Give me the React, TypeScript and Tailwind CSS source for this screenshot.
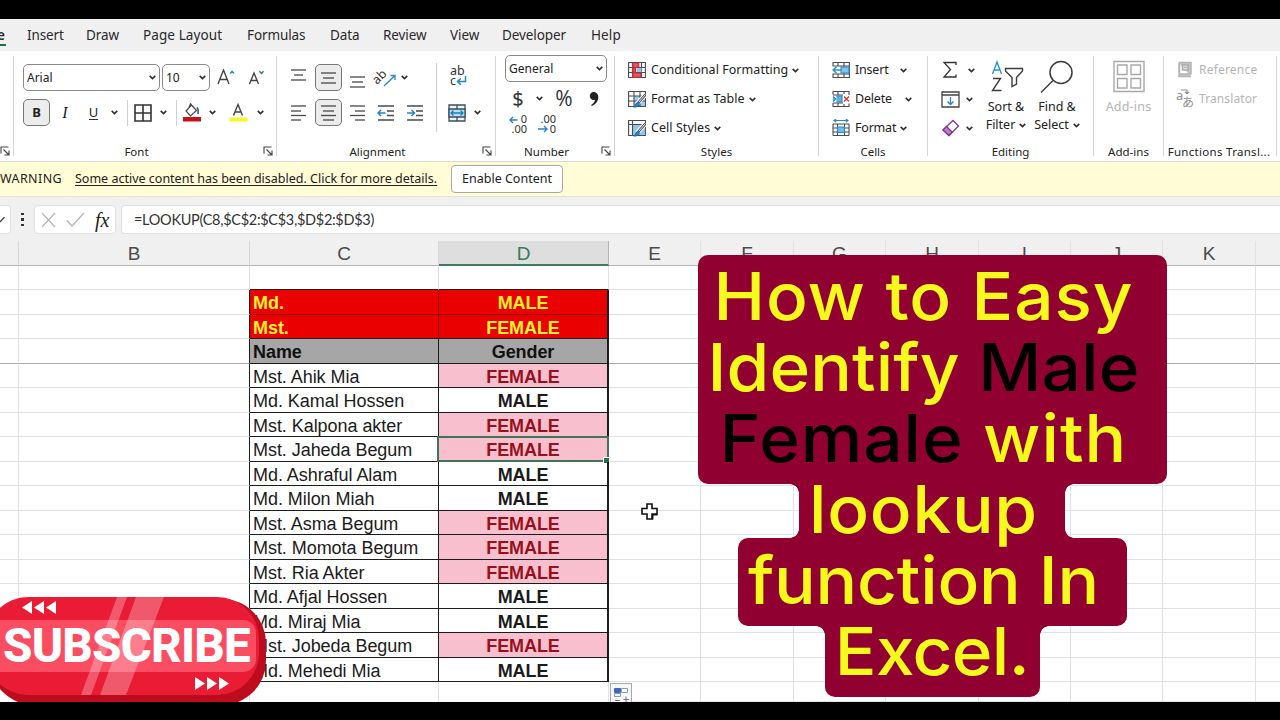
import type { ReactNode } from "react";

const ui = "font-['Noto_Sans','Open_Sans',sans-serif]";

function Chevron({ className = "" }: { className?: string }) {
  return (
    <svg className={`shrink-0 ${className}`} width="7" height="5" viewBox="0 0 7 5" fill="none" stroke="#2c2c2c" strokeWidth="1.5">
      <path d="M0.7 0.9 3.5 3.6 6.3 0.9" />
    </svg>
  );
}

function Launcher() {
  return (
    <svg width="10" height="10" viewBox="0 0 10 10" fill="none" stroke="#444" strokeWidth="1.1" className="absolute right-[3px] bottom-0">
      <path d="M1 7.5V1h7.5M3.5 3.5 8.5 8.5M9 4.5V9H4.5" />
    </svg>
  );
}

function Group({ width, label, launcher, children, labelClass = "" }: { width: string; label?: string; launcher?: boolean; children?: ReactNode; labelClass?: string }) {
  return (
    <section className={`relative flex h-[100px] shrink-0 flex-col border-r border-[#d4d4d4] ${width}`}>
      <div className="flex h-[86px] shrink-0 flex-col">{children}</div>
      <div className={`flex h-[19px] shrink-0 items-center justify-center text-[11.5px] leading-none whitespace-nowrap text-[#222] ${labelClass}`}>{label}</div>
      {launcher && <Launcher />}
    </section>
  );
}

function Slot({ w, children }: { w: string; children?: ReactNode }) {
  return <div className={`flex shrink-0 items-center justify-center ${w}`}>{children}</div>;
}

function Lines({ rows }: { rows: [number, number, number][] }) {
  return (
    <svg width="17" height="20" viewBox="0 0 17 20" stroke="#4a4a4a" strokeWidth="1.3" className="shrink-0">
      {rows.map(([y, a, b]) => (
        <path key={y} d={`M${a} ${y}H${b}`} />
      ))}
    </svg>
  );
}

const pressed = "flex h-[27px] w-[27px] shrink-0 items-center justify-center rounded-[5px] border border-[#777] bg-[#ececec]";

function GridIcon({ kind }: { kind: "cond" | "table" | "styles" | "insert" | "delete" | "format" }) {
  return (
    <svg width="18" height="18" viewBox="0 0 18 18" fill="none" stroke="#4b4b4b" strokeWidth="1.1" className="shrink-0">
      {kind === "cond" && (
        <>
          <path d="M.6 1.5H17.4V16.5H.6ZM.6 6.5H17.4M.6 11.5H17.4M4.5 1.5V16.5M13.5 1.5V16.5" />
          <path d="M4.8 2h6v4.2H4.8zM4.8 7h2.7v4H4.8zM4.8 12h8v4.2H4.8z" fill="#e9545d" stroke="#c52e38" />
          <path d="M8.500 7h5v4h-5z" fill="#8fc6ea" stroke="none" />
        </>
      )}
      {kind === "table" && (
        <>
          <path d="M.6 1.5H17.4V16.5H.6Z" />
          <path d="M6 6h11v10H6z" fill="#9ccdf0" stroke="none" />
          <path d="M.6 6H17M.6 11H17M6 1.5V16.5M12 1.5V16.5" />
          <path d="M17.5 4.5 9 14" stroke="#fff" strokeWidth="4.5" />
          <path d="M17.5 4.5 10.5 12.5" stroke="#4b4b4b" strokeWidth="2.6" />
          <path d="M17 5 11 12" stroke="#fff" strokeWidth=".9" />
          <path d="M5.5 17c2.5-.3 2-4 4.3-4.4 2.6.2 1.9 4.400-4.300 4.400Z" fill="#2f8fd6" stroke="#1c6da8" />
        </>
      )}
      {kind === "styles" && (
        <>
          <path d="M.6 1.5H17.4V16.5H.6Z" />
          <path d="M4.5 5.5H17V16H4.5z" fill="#8fc8ef" stroke="none" />
          <path d="M.6 5.5H17.4M4.5 1.5V16.5" />
          <path d="M17.5 4.5 9 14" stroke="#fff" strokeWidth="4.5" />
          <path d="M17.5 4.5 10.5 12.5" stroke="#4b4b4b" strokeWidth="2.6" />
          <path d="M17 5 11 12" stroke="#fff" strokeWidth=".9" />
          <path d="M5.5 17c2.5-.3 2-4 4.3-4.4 2.6.2 1.9 4.400-4.300 4.400Z" fill="#2f8fd6" stroke="#1c6da8" />
        </>
      )}
      {kind === "insert" && (
        <>
          <path d="M1 5.5V1.5H17.4V16.5H1V12.5M1 5H17M1 13H17M6 1.5V5M12 1.5V16.5M6 13V16.5" />
          <path d="M9 6H17V12H9z" fill="#7fc3ee" stroke="#2b87c4" />
          <path d="M9 9H1M4.5 5.8 1.2 9 4.5 12.2" stroke="#2492d1" strokeWidth="1.5" />
        </>
      )}
      {kind === "delete" && (
        <>
          <path d="M1 4.5V1.5H17V5M1 13V16.5H17V13.5M6 1.5V5M12 1.5V4M6 13V16.5M12 14V16.5M1 5H11M1 13H11" />
          <path d="M4.5 6H10V12H4.5M1 6.5 4 9 1 11.5" fill="#5bb1e8" stroke="#2b87c4" />
          <path d="M12 6.5 17 11.5M17 6.5 12 11.5" stroke="#d13438" strokeWidth="1.3" />
        </>
      )}
      {kind === "format" && (
        <>
          <path d="M2 1.5H16M4.2 0 2 1.5 4.2 3M13.8 0 16 1.5 13.8 3" stroke="#2b87c4" />
          <path d="M1 5H17M1 16.5H17M1 5V16.5M17 5V16.5M5.5 5V16.5M12.5 5V16.5M1 9H17M1 13H17" />
          <path d="M5.5 8H12.5V13.5H5.5z" fill="#6bbcf0" stroke="#2b87c4" />
        </>
      )}
    </svg>
  );
}

function Tabs() {
  const tabs: [string, string][] = [
    ["Insert", "w-[59px]"],
    ["Draw", "w-[57px]"],
    ["Page Layout", "w-[104px]"],
    ["Formulas", "w-[83px]"],
    ["Data", "w-[53px]"],
    ["Review", "w-[67px]"],
    ["View", "w-[52px]"],
    ["Developer", "w-[89px]"],
    ["Help", "w-[60px]"],
  ];
  return (
    <nav className="flex h-8 items-center bg-[#f0f0f0] text-[13.5px] leading-none text-[#2a2a2a]">
      <div className="flex h-full w-[27px] flex-col pt-[8px]">
        <span className="-ml-[3px] h-[17px] font-semibold leading-[17px]">e</span>
        <span className="h-[2px] w-[6px] bg-[#1f7145]" />
      </div>
      {tabs.map(([t, w]) => (
        <span key={t} className={`shrink-0 whitespace-nowrap pt-px ${t === "Page Layout" || t === "Help" ? "tracking-[0.100px]" : "tracking-[-0.100px]"} ${w}`}>{t}</span>
      ))}
    </nav>
  );
}

function FontGroup() {
  return (
    <Group width="w-[263px]" label="Font" launcher labelClass="pr-[17px]">
      <div className="mt-2 flex h-[27px] items-center pl-[9px]">
        <div className="flex h-[27px] w-[137px] items-center justify-between rounded-[5px] border border-[#8a8a8a] pr-[3px] pl-[3px] text-[12px]">
          <span>Arial</span>
          <Chevron />
        </div>
        <div className="ml-[2px] flex h-[27px] w-[48px] items-center justify-between rounded-[5px] border border-[#8a8a8a] pr-[3px] pl-[3px] text-[12px]">
          <span>10</span>
          <Chevron />
        </div>
        <Slot w="w-[32px]">
          <svg width="18" height="17" viewBox="0 0 18 17" fill="none" stroke="#444" strokeWidth="1.4">
            <path d="M1 15 6.5 1 12 15M3 10.500H10" />
            <path d="M13 4.5 15 2.3 17 4.5" stroke="#2d8f9c" />
          </svg>
        </Slot>
        <Slot w="w-[29px]">
          <svg width="17" height="17" viewBox="0 0 17 17" fill="none" stroke="#444" strokeWidth="1.4">
            <path d="M1.5 15 6 4 10.5 15M3 11.500H9" />
            <path d="M11.5 2.3 13.5 4.5 15.5 2.3" stroke="#2d6f9c" />
          </svg>
        </Slot>
      </div>
      <div className="mt-[8px] flex h-[27px] items-center pl-[9px]">
        <div className={`${pressed} text-[13px] font-bold`}>B</div>
        <Slot w="w-[30px]"><span className="font-['Liberation_Serif',serif] text-[16px] italic">I</span></Slot>
        <Slot w="w-[27px]"><span className="border-b-[1.5px] border-[#333] text-[13px] leading-[14px]">U</span></Slot>
        <Slot w="w-[15px]"><Chevron /></Slot>
        <Slot w="w-[11px]"><span className="h-[26px] w-px bg-[#d0d0d0]" /></Slot>
        <Slot w="w-[20px]">
          <svg width="18" height="18" viewBox="0 0 18 18" fill="none" stroke="#333" strokeWidth="1.6">
            <path d="M1 1H17V17H1ZM9 1V17M1 9H17" />
          </svg>
        </Slot>
        <Slot w="w-[20px]"><Chevron /></Slot>
        <Slot w="w-[6px]"><span className="h-[26px] w-px bg-[#d0d0d0]" /></Slot>
        <Slot w="w-[26px]">
          <svg width="20" height="20" viewBox="0 0 20 20" fill="none" stroke="#444" strokeWidth="1.2">
            <path d="M9.5 2 14.5 7.5 8.5 13 4 8ZM9.5 2 8.5 .8 7 4.5" />
            <path d="M14.8 4.5c1.5.8 1.6 3.5 1.2 6.5" stroke="#2c5f7e" strokeWidth="1.6" />
            <path d="M1 14H19V18.5H1z" fill="#c8101c" stroke="none" />
          </svg>
        </Slot>
        <Slot w="w-[15px]"><Chevron /></Slot>
        <Slot w="w-[37px]">
          <svg width="19" height="20" viewBox="0 0 19 20" fill="none" stroke="#444" strokeWidth="1.4">
            <path d="M4.5 12.5 9 1.5 13.5 12.5M6 9H12" />
            <path d="M.5 14.5H18.5V18.5H.5z" fill="#f6f62a" stroke="none" />
          </svg>
        </Slot>
        <Slot w="w-[7px]"><Chevron /></Slot>
      </div>
    </Group>
  );
}

function AlignmentGroup() {
  return (
    <Group width="w-[219px]" label="Alignment" launcher labelClass="pr-[17px]">
      <div className="mt-2 flex">
        <div className="flex w-[159px] flex-col gap-[8px] pl-[13px]">
          <div className="flex h-[27px] items-center">
            <Lines rows={[[2, 1, 16], [7, 4, 13], [12, 1, 16]]} />
            <div className={`${pressed} ml-[8px]`}><Lines rows={[[5, 1, 16], [10, 3, 14], [15, 1, 16]]} /></div>
            <div className="ml-[7px] flex"><Lines rows={[[9, 1, 16], [14, 3, 14], [19, 1, 16]]} /></div>
            <svg width="19" height="20" viewBox="0 0 19 20" className="ml-[11px] overflow-visible" fill="none">
              <text x="-2" y="12" transform="rotate(-45 5 12)" fontSize="12.5" fill="#333">ab</text>
              <path d="M7 18 18 7.5M13.5 7.5H18V12" stroke="#2d87c0" strokeWidth="1.3" />
            </svg>
            <Chevron className="ml-[5px]" />
          </div>
          <div className="flex h-[27px] items-center">
            <Lines rows={[[3, 1, 16], [8, 1, 11], [12.5, 1, 16], [17, 1, 11]]} />
            <div className={`${pressed} ml-[8px]`}><Lines rows={[[3, 1, 16], [8, 3, 14], [12.5, 1, 16], [17, 3, 14]]} /></div>
            <div className="ml-[7px] flex"><Lines rows={[[3, 1, 16], [8, 6, 16], [12.5, 1, 16], [17, 6, 16]]} /></div>
            {[0, 1].map((i) => (
              <svg key={i} width="18" height="20" viewBox="0 0 18 20" fill="none" stroke="#4a4a4a" strokeWidth="1.3" className="ml-[11px]">
                <path d="M1 3H17M10 8H17M10 12.5H17M1 17H17" />
                <path d={i ? "M1 10H8M5.5 7 8.5 10 5.5 13" : "M1.5 10H8.5M4 7 1 10 4 13"} stroke="#2286c3" strokeWidth="1.5" />
              </svg>
            ))}
          </div>
        </div>
        <div className="-mt-px h-[69px] w-px bg-[#d0d0d0]" />
        <div className="flex flex-col gap-[8px] pl-[11px]">
          <div className="relative flex h-[27px] w-[18px] flex-col text-[12.5px] leading-[10px] text-[#333]">
            <span className="pt-[2px] pl-[2px]">ab<br />c</span>
            <svg width="11" height="11" viewBox="0 0 11 11" fill="none" stroke="#2286c3" strokeWidth="1.5" className="absolute top-[12px] left-[8px]">
              <path d="M9.5 0V5.5H2M4.8 2.5 1.5 5.5 4.8 8.8" />
            </svg>
          </div>
          <div className="flex h-[27px] items-center">
            <svg width="18" height="18" viewBox="0 0 18 18" fill="none" stroke="#3f4d58" strokeWidth="1.3">
              <path d="M1 1H17V17H1Z" fill="#e9f4fb" />
              <path d="M1 5H17V13H1Z" fill="#b8def5" />
              <path d="M9 1V5M9 13V17" />
              <path d="M3 9H15M5.5 6.5 3 9 5.5 11.5M12.5 6.5 15 9 12.5 11.5" stroke="#1d7fc0" />
            </svg>
            <Chevron className="ml-[8px]" />
          </div>
        </div>
      </div>
    </Group>
  );
}

function NumberGroup() {
  return (
    <Group width="w-[119px]" label="Number" launcher labelClass="pr-[17px]">
      <div className="-mt-px ml-[9px] flex h-[27px] w-[102px] shrink-0 items-center justify-between rounded-[5px] border border-[#8a8a8a] pr-[3px] pl-[3px] text-[12px]">
        <span>General</span>
        <Chevron />
      </div>
      <div className="mt-[3px] flex h-[27px] shrink-0 items-center pl-[9px] text-[#333]">
        <Slot w="w-[26px]"><span className="text-[20px] leading-none">$</span></Slot>
        <Slot w="w-[16px]"><Chevron /></Slot>
        <Slot w="w-[34px]"><span className="font-['Open_Sans',sans-serif] text-[21px] leading-none">%</span></Slot>
        <Slot w="w-[26px]">
          <svg width="10" height="16" viewBox="0 0 10 16"><path d="M4.5 1C7.5 1 9.3 3 9.3 6c0 4-2.6 7.4-6.5 9l-.6-1C4.5 12.5 5.8 11 6 8.8 3 9.6.8 7.7.8 5 .8 2.7 2.4 1 4.5 1Z" fill="#222" /></svg>
        </Slot>
      </div>
      <div className="mt-[2px] flex h-[22px] shrink-0 gap-[11px] pl-[13px] text-[11px] leading-[10px] text-[#333]">
        <div className="relative w-[18px] text-right"><div>0<br />.00</div>
          <svg width="9" height="8" viewBox="0 0 9 8" fill="none" stroke="#2286c3" strokeWidth="1.4" className="absolute top-[2px] left-0"><path d="M8.500 4H1M4 1 1 4 4 7" /></svg>
        </div>
        <div className="relative w-[18px] text-right"><div>.00<br />0</div>
          <svg width="10" height="8" viewBox="0 0 10 8" fill="none" stroke="#2286c3" strokeWidth="1.4" className="absolute top-[11px] left-0"><path d="M0 4H8.500M6 1 9 4 6 7" /></svg>
        </div>
      </div>
    </Group>
  );
}

function StylesGroup() {
  const items = [["cond", "Conditional Formatting"], ["table", "Format as Table"], ["styles", "Cell Styles"]] as const;
  return (
    <Group width="w-[204px]" label="Styles">
      {items.map(([k, t]) => (
        <div key={k} className="flex h-[29px] shrink-0 items-center pb-px pl-[13px] text-[12.5px] whitespace-nowrap">
          <GridIcon kind={k} />
          <span className="ml-[5px] pt-px tracking-[0.050px]">{t}</span>
          <Chevron className="ml-[4px]" />
        </div>
      ))}
    </Group>
  );
}

function CellsGroup() {
  const items = [["insert", "Insert", "w-[45px]"], ["delete", "Delete", "w-[50px]"], ["format", "Format", "w-[45px]"]] as const;
  return (
    <Group width="w-[109px]" label="Cells">
      {items.map(([k, t, w]) => (
        <div key={k} className="flex h-[29px] shrink-0 items-center pb-px pl-[13px] text-[12.5px] whitespace-nowrap">
          <GridIcon kind={k} />
          <span className={`ml-[5px] pt-px tracking-[-0.200px] ${w}`}>{t}</span>
          <Chevron />
        </div>
      ))}
    </Group>
  );
}

function EditingGroup() {
  return (
    <Group width="w-[166px]" label="Editing">
      <div className="flex">
        <div className="w-[50px] pl-[13px]">
          <div className="flex h-[29px] items-center gap-[8px] pb-px">
            <svg width="19" height="18" viewBox="0 0 19 18" fill="none" stroke="#333" strokeWidth="1.3"><path d="M15 4V1.5H3L9.5 8.5 3 16H15V13.5" /></svg>
            <Chevron />
          </div>
          <div className="flex h-[29px] items-center gap-[6px] pb-px">
            <svg width="19" height="17" viewBox="0 0 19 17" fill="none" stroke="#444" strokeWidth="1.3"><path d="M1 1H18V16H1ZM1 4H18" /><path d="M9.5 6V13.5M6.5 10.5 9.5 13.5 12.5 10.5" stroke="#2286c3" /></svg>
            <Chevron />
          </div>
          <div className="flex h-[29px] items-center gap-[6px] pb-px">
            <svg width="19" height="18" viewBox="0 0 19 18" fill="#fff" stroke="#7a3b86" strokeWidth="1.3"><path d="M12 1.5 17.5 7 8 16.5 2 11Z" /><path d="M5.5 7.5 11.3 13.2 8 16.5 2 11Z" fill="#c777d6" /></svg>
            <Chevron />
          </div>
        </div>
        <div className="flex w-[56px] flex-col items-center pt-[4px] text-[12.5px] leading-[18px]">
          <svg width="33" height="33" viewBox="0 0 33 33" fill="none" stroke="#3c3c3c" strokeWidth="1.4" className="ml-[2px]">
            <path d="M1.5 14 6 2 10.5 14M3 10H9" stroke="#2a93c4" />
            <path d="M2 18.5H9.5L1.5 30.5H10.500" />
            <path d="M14.5 8.5H31.5V11L25.5 17.5V24L21 26.5V17.5L14.5 11Z" />
          </svg>
          <span className="mt-[5px]">Sort &amp;</span>
          <span className="flex items-center gap-[4px]">Filter<Chevron /></span>
        </div>
        <div className="flex w-[46px] flex-col items-center pt-[4px] text-[12.5px] leading-[18px]">
          <svg width="34" height="34" viewBox="0 0 34 34" fill="none" stroke="#3c3c3c" strokeWidth="1.5" className="-mb-px shrink-0">
            <circle cx="21" cy="12.5" r="11" />
            <path d="M13 20.5 1 32.5" />
          </svg>
          <span className="mt-[5px]">Find &amp;</span>
          <span className="flex items-center gap-[4px]">Select<Chevron /></span>
        </div>
      </div>
    </Group>
  );
}

function Ribbon() {
  return (
    <div className="flex h-[111px] items-start overflow-hidden border-b border-[#d9d9d9] bg-white pt-[5px] text-[#222]">
      <Group width="w-[14px]" launcher />
      <FontGroup />
      <AlignmentGroup />
      <NumberGroup />
      <StylesGroup />
      <CellsGroup />
      <EditingGroup />
      <Group width="w-[70px]" label="Add-ins">
        <div className="flex flex-col items-center pt-[4px] text-[12.5px] leading-[18px] text-[#b4b4b4]">
          <svg width="32" height="33" viewBox="0 0 32 33" fill="none" stroke="#a9a9a9" strokeWidth="1.4">
            <path d="M1 1.5H31V31.5H1ZM4.5 5H14V14.5H4.5ZM18 5H27.5V14.5H18ZM4.5 18.5H14V28H4.5ZM18 18.5H27.5V28H18Z" />
          </svg>
          <span className="mt-[5px] tracking-[0.200px]">Add-ins</span>
        </div>
      </Group>
      <Group width="w-[113px]" label="Functions Transl..." labelClass="pr-[2px] tracking-[0.300px]">
        <div className="flex h-[29px] shrink-0 items-center pb-px pl-[12px] text-[12px] text-[#b4b4b4]">
          <svg width="18" height="18" viewBox="0 0 18 18" fill="none" stroke="#b4b4b4" strokeWidth="1.5">
            <path d="M3.5 1.5H15V13H3.5ZM3 2V15.5H15" fill="#c4c4c4" /><path d="M6.5 4H12V9H6.5Z" fill="#eee" stroke="#aaa" /><path d="M7.5 6.500h3.500" />
          </svg>
          <span className="ml-[5px] tracking-[0.200px]">Reference</span>
        </div>
        <div className="flex h-[29px] shrink-0 items-center pb-px pl-[12px] text-[12px] text-[#b4b4b4]">
          <div className="relative h-[20px] w-[18px]">
            <span className="absolute -top-px left-0 text-[13px] leading-[14px] text-[#909090]">a</span>
            <span className="absolute top-[7px] left-[6px] font-['Noto_Sans_CJK_JP',sans-serif] text-[12px] leading-[12px] text-[#909090]">あ</span>
            <svg width="9" height="5" viewBox="0 0 9 5" fill="none" stroke="#909090" strokeWidth="1.2" className="absolute top-0 left-[5px]"><path d="M0 1H6V4.5M4 3 6 4.8 8 3" /></svg>
          </div>
          <span className="ml-[5px] tracking-[0.100px]">Translator</span>
        </div>
      </Group>
    </div>
  );
}

function Warning() {
  return (
    <div className="flex h-[35px] items-center border-b border-[#e2e2d2] bg-[#fffcd6] text-[12.5px] whitespace-nowrap text-[#222]">
      <span className="w-[75px] pt-px tracking-[0.400px]">WARNING</span>
      <span className="w-[376px] pt-px underline underline-offset-2">Some active content has been disabled. Click for more details.</span>
      <button className="h-[28px] w-[112px] rounded-[4px] border border-[#a8a8a8] bg-white">Enable Content</button>
    </div>
  );
}

function FormulaBar() {
  return (
    <div className="flex h-[44px] items-start bg-[#f0f0f0] pt-[8px]">
      <div className="flex h-[29px] w-[11px] items-center rounded-r-[4px] border border-l-0 border-[#e0e0e0] bg-white"><svg width="6" height="6" viewBox="0 0 6 6" fill="none" stroke="#444" strokeWidth="1.3"><path d="M0 5 4.5 0" /></svg></div>
      <div className="flex h-[29px] w-[23px] flex-col items-center justify-center gap-[3px]">
        {[0, 1, 2].map((i) => <span key={i} className="h-[2.500px] w-[2.500px] bg-[#333]" />)}
      </div>
      <div className="flex h-[29px] w-[82px] items-center rounded-[4px] border border-[#e0e0e0] bg-white pl-[6px]">
        <svg width="44" height="18" viewBox="0 0 44 18" fill="none" stroke="#b5b5b5" strokeWidth="1.3"><path d="M1 2 14 16M14 2 1 16M26 9.5 31 15 43 2" /></svg>
        <span className="ml-[10px] font-['Liberation_Serif',serif] text-[20px] leading-none text-[#222] italic">fx</span>
      </div>
      <div className="ml-[5px] flex h-[29px] flex-1 items-center rounded-l-[4px] border border-r-0 border-[#e0e0e0] bg-white pl-[12px] font-['Lato','Noto_Sans',sans-serif] text-[14.5px] tracking-[-0.300px] text-[#333]">=LOOKUP(C8,$C$2:$C$3,$D$2:$D$3)</div>
    </div>
  );
}

const restCols = ["w-[92px]", "w-[93px]", "w-[92px]", "w-[93px]", "w-[92px]", "w-[92px]", "w-[93px]", "w-[25px]"];
const restNames = ["E", "F", "G", "H", "I", "J", "K", ""];

type Row = { c: string; d: string; kind: "key" | "head" | "data" };
const rows: Row[] = [
  { c: "Md.", d: "MALE", kind: "key" },
  { c: "Mst.", d: "FEMALE", kind: "key" },
  { c: "Name", d: "Gender", kind: "head" },
  { c: "Mst. Ahik Mia", d: "FEMALE", kind: "data" },
  { c: "Md. Kamal Hossen", d: "MALE", kind: "data" },
  { c: "Mst. Kalpona akter", d: "FEMALE", kind: "data" },
  { c: "Mst. Jaheda Begum", d: "FEMALE", kind: "data" },
  { c: "Md. Ashraful Alam", d: "MALE", kind: "data" },
  { c: "Md. Milon Miah", d: "MALE", kind: "data" },
  { c: "Mst. Asma Begum", d: "FEMALE", kind: "data" },
  { c: "Mst. Momota Begum", d: "FEMALE", kind: "data" },
  { c: "Mst. Ria Akter", d: "FEMALE", kind: "data" },
  { c: "Md. Afjal Hossen", d: "MALE", kind: "data" },
  { c: "Md. Miraj Mia", d: "MALE", kind: "data" },
  { c: "Mst. Jobeda Begum", d: "FEMALE", kind: "data" },
  { c: "Md. Mehedi Mia", d: "MALE", kind: "data" },
];

function EmptyCells({ line = "border-b-[#e1e1e1]" }: { line?: string }) {
  return (
    <>
      {restCols.map((w, i) => (
        <div key={i} className={`shrink-0 border-r border-b border-r-[#e1e1e1] ${line} ${w}`} />
      ))}
    </>
  );
}

function Sheet() {
  return (
    <div className="h-[461px] overflow-hidden bg-white font-['Liberation_Sans',Arial,sans-serif]">
      <div className="flex h-[24.500px] bg-[#f0f0f0] text-[19px] leading-none text-[#4a4a4a]">
        <div className="w-[19px] shrink-0 border-r border-b border-r-[#d8d8d8] border-b-[#b5b5b5]" />
        <div className="flex w-[231px] shrink-0 items-center justify-center border-r border-b border-r-[#d8d8d8] border-b-[#b5b5b5] pt-[2px]">B</div>
        <div className="flex w-[189px] shrink-0 items-center justify-center border-r border-b border-r-[#d8d8d8] border-b-[#b5b5b5] pt-[2px]">C</div>
        <div className="flex w-[170px] shrink-0 items-center justify-center border-r border-b-2 border-r-[#b5b5b5] border-b-[#3b7d5b] bg-[#dedede] pt-[3px] text-[#357a5c]">D</div>
        {restCols.map((w, i) => (
          <div key={i} className={`flex shrink-0 items-center justify-center border-r border-b border-r-[#e2e2e2] border-b-[#b5b5b5] pt-[2px] ${w}`}>{restNames[i]}</div>
        ))}
      </div>
      <div className="flex h-[24.500px]">
        <div className="w-[19px] shrink-0 border-r border-b border-[#e1e1e1]" />
        <div className="w-[231px] shrink-0 border-r border-b border-[#e1e1e1]" />
        <div className="w-[189px] shrink-0 border-r border-b border-r-[#e1e1e1] border-b-[#222]" />
        <div className="w-[170px] shrink-0 border-r border-b border-r-[#e1e1e1] border-b-[#222]" />
        <EmptyCells />
      </div>
      {rows.map((r, i) => {
        const key = r.kind === "key";
        const head = r.kind === "head";
        const female = r.kind === "data" && r.d === "FEMALE";
        const side = head ? "border-b-[#a8a8a8]" : "border-b-[#e1e1e1]";
        const edge = key ? (i === 0 ? "border-b-[#8d0000]" : "border-b-[#222]") : "border-b-[#1c1c1c]";
        const fill = key ? "bg-[#eb0000] font-bold text-[#fff32a]" : head ? "bg-[#a6a6a6] font-bold text-[#111]" : "text-[#1b1b1b]";
        return (
          <div key={r.c} className="flex h-[24.5px] text-[18px] leading-none whitespace-nowrap">
            <div className={`w-[19px] shrink-0 border-r border-b border-r-[#e1e1e1] ${side}`} />
            <div className={`w-[231px] shrink-0 border-r-[1.5px] border-b border-r-[#1c1c1c] ${side}`} />
            <div className={`flex w-[189px] shrink-0 items-center border-r border-b pt-[2.500px] pl-[3px] tracking-[-0.050px] ${key ? "border-r-[#8d0000]" : "border-r-[#1c1c1c]"} ${edge} ${fill}`}>{r.c}</div>
            <div className={`relative flex w-[170px] shrink-0 items-center justify-center border-r-2 border-b pt-[2.500px] font-bold tracking-[-0.100px] ${edge} border-r-[#1c1c1c] ${fill} ${female ? "bg-[#f8c0ce]" : ""}`}>
              <span className={female ? "text-[#98101c]" : ""}>{r.d}</span>
              {i === 6 && (
                <div className="absolute -inset-x-[2px] -inset-y-[1.500px] border-2 border-[#3f7556]">
                  <span className="absolute -right-[3px] -bottom-[4px] h-[7px] w-[7px] border border-white bg-[#2f6b49]" />
                </div>
              )}
            </div>
            <EmptyCells line={side} />
          </div>
        );
      })}
      <div className="flex h-[20px]">
        <div className="w-[19px] shrink-0 border-r border-[#e1e1e1]" />
        <div className="w-[231px] shrink-0 border-r border-[#e1e1e1]" />
        <div className="w-[189px] shrink-0 border-r border-[#e1e1e1]" />
        <div className="w-[170px] shrink-0 border-r border-[#e1e1e1]" />
        <EmptyCells />
      </div>
    </div>
  );
}

function Title() {
  const line = "flex h-[71px] items-center justify-center whitespace-pre";
  return (
    <div className="absolute top-[255px] left-[698px] h-[442px] w-[469px]">
      <div className="flex flex-col">
        <div className="h-[229px] w-[469px] rounded-[10px] bg-[#900030]" />
        <div className="relative ml-[101px] h-[54px] w-[266px] bg-[#900030]">
          <span className="absolute top-0 -left-[9px] h-[9px] w-[9px] bg-[radial-gradient(circle_at_0_100%,transparent_8.5px,#900030_9px)]" />
          <span className="absolute bottom-0 -left-[9px] h-[9px] w-[9px] bg-[radial-gradient(circle_at_0_0,transparent_8.5px,#900030_9px)]" />
          <span className="absolute top-0 -right-[9px] h-[9px] w-[9px] bg-[radial-gradient(circle_at_100%_100%,transparent_8.5px,#900030_9px)]" />
          <span className="absolute -right-[9px] bottom-0 h-[9px] w-[9px] bg-[radial-gradient(circle_at_100%_0,transparent_8.5px,#900030_9px)]" />
        </div>
        <div className="ml-[40px] h-[88px] w-[389px] rounded-[10px] bg-[#900030]" />
        <div className="relative ml-[127px] h-[71px] w-[215px] rounded-b-[10px] bg-[#900030]">
          <span className="absolute top-0 -left-[9px] h-[9px] w-[9px] bg-[radial-gradient(circle_at_0_100%,transparent_8.5px,#900030_9px)]" />
          <span className="absolute top-0 -right-[9px] h-[9px] w-[9px] bg-[radial-gradient(circle_at_100%_100%,transparent_8.5px,#900030_9px)]" />
        </div>
      </div>
      <div className="absolute top-[6px] left-0 w-[451px] scale-x-[1.05] font-['Inter',sans-serif] text-[66px] leading-[71px] font-medium text-[#f5f91c]">
        <div className={`${line} tracking-[0.9px]`}>How to Easy</div>
        <div className={`${line} tracking-[0.100px]`}>Identify <span className="text-black">Male</span></div>
        <div className={`${line} tracking-[0.9px]`}><span className="text-black">Female</span> with</div>
        <div className={`${line} tracking-[0.700px]`}>lookup</div>
        <div className={`${line} tracking-[-0.200px]`}>function In</div>
        <div className={`${line} pl-[16px] tracking-[-0.600px]`}>Excel.</div>
      </div>
    </div>
  );
}

function Subscribe() {
  return (
    <div className="absolute top-[590px] left-0 h-[112px] w-[275px] overflow-hidden">
      <svg width="275" height="112" viewBox="0 0 275 112" className="absolute inset-0">
        <rect x="-10" y="9" width="276" height="106" rx="44" fill="#bd0c1e" />
        <rect x="-14" y="7" width="273" height="98" rx="42" fill="#ea1c35" />
        <rect x="-14" y="30" width="270" height="52" rx="13" fill="#fb4d62" />
        <path d="M117 7H127L91 105H81ZM136 7H164L126 105H100Z" fill="#fff" opacity=".27" />
        <path d="M32 11V24L22 17.5ZM44 11V24L34 17.5ZM56 11V24L46 17.5Z" fill="#fff" />
        <path d="M195 87V100L205 93.5ZM207 87V100L217 93.5ZM219 87V100L229 93.5Z" fill="#fff" />
      </svg>
      <div className="relative pt-[31px] pl-[3px] font-['Roboto',sans-serif] text-[47.5px] leading-[50px] font-extrabold tracking-[-0.800px] text-white">SUBSCRIBE</div>
    </div>
  );
}

export default function App() {
  return (
    <main className={`relative h-[720px] w-[1280px] overflow-hidden bg-black pt-[19px] ${ui}`}>
      <Tabs />
      <Ribbon />
      <Warning />
      <FormulaBar />
      <Sheet />
      <Title />
      <Subscribe />
      <svg width="19" height="19" viewBox="0 0 19 19" className="absolute top-[502px] left-[640px]">
        <path d="M7 2H12V6.5H17V12H12V17H7V12H2V6.5H7Z" fill="#fff" stroke="#111" strokeWidth="1.6" />
        <path d="M12.7 17.5V12.7H17.5" fill="none" stroke="#111" strokeWidth="1.5" />
      </svg>
      <div className="absolute top-[683px] left-[610px] h-[19px] w-[22px] border border-b-0 border-[#a9a9a9] bg-[#f7f7f7]">
        <svg width="20" height="18" viewBox="0 0 20 18" fill="#fff" stroke="#8a9ab0">
          <path d="M10.5 4.5H16.5V8.5H10.5ZM3.5 9.5H9.5V12.5H3.5Z" />
          <path d="M3.5 4.5H9.5V8.5H3.5Z" fill="#3f68b5" stroke="#3f68b5" />
          <path d="M15 12.5V18M12.5 15.5H18M4 16.5H9" stroke="#777" />
        </svg>
      </div>
    </main>
  );
}
